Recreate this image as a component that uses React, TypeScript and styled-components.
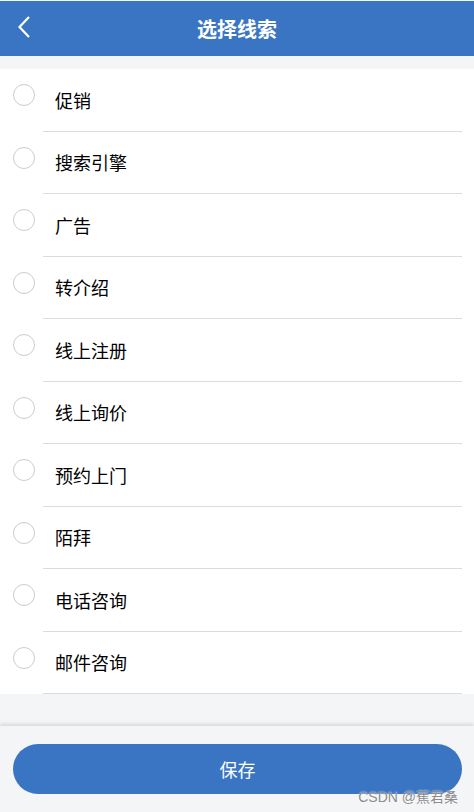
import * as React from 'react';
import styled, { createGlobalStyle } from 'styled-components';

const GlobalStyle = createGlobalStyle`
  html, body {
    margin: 0;
    padding: 0;
    background: #f4f5f7;
    font-family: "Noto Sans CJK SC", "Liberation Sans", sans-serif;
  }
`;

const options = [
  '促销',
  '搜索引擎',
  '广告',
  '转介绍',
  '线上注册',
  '线上询价',
  '预约上门',
  '陌拜',
  '电话咨询',
  '邮件咨询',
];

const SPage = styled.div`
  position: relative;
  min-height: 812px;
  display: flex;
  flex-direction: column;
  padding-top: 1px;
  box-sizing: border-box;
  background: #f4f5f7;
`;

const SHeader = styled.header`
  height: 55px;
  background: #3a75c4;
  display: flex;
  align-items: center;
  justify-content: center;
  position: relative;
`;

const SBack = styled.button`
  position: absolute;
  left: 12px;
  top: 10px;
  width: 24px;
  height: 32px;
  padding: 0;
  border: none;
  background: transparent;
  display: flex;
  align-items: center;
  justify-content: center;
`;

const STitle = styled.h1`
  margin: 0;
  color: #fff;
  font-size: 20px;
  font-weight: 700;
  line-height: 1;
`;

const SList = styled.ul`
  list-style: none;
  margin: 13px 0 0;
  padding: 0;
  background: #fff;
`;

const SRow = styled.li`
  display: flex;
  height: 62.5px;
`;

const SRadioCell = styled.div`
  width: 43px;
  padding: 15px 0 0 13px;
  box-sizing: border-box;
`;

const SRadio = styled.span<{ checked?: boolean }>`
  display: block;
  width: 22px;
  height: 22px;
  border-radius: 50%;
  box-sizing: border-box;
  border: 1px solid ${(p) => (p.checked ? '#3a75c4' : '#cccccc')};
  background: ${(p) => (p.checked ? '#3a75c4' : '#fff')};
`;

const SLabel = styled.div`
  flex: 1;
  margin-right: 12px;
  padding-left: 12px;
  display: flex;
  align-items: center;
  border-bottom: 1px solid #dcdcdc;
  font-size: 18px;
  color: #000;
`;

const SFooter = styled.footer`
  margin-top: auto;
  height: 86px;
  background: #f4f5f7;
  box-shadow: 0 -2px 4px rgba(0, 0, 0, 0.12);
  padding: 18px 12px 0 13px;
  box-sizing: border-box;
`;

const SSave = styled.button`
  width: 100%;
  height: 50px;
  border: none;
  border-radius: 25px;
  background: #3a75c4;
  color: #fff;
  font-family: inherit;
  font-size: 18px;
`;

const SWatermark = styled.div`
  position: absolute;
  right: 16px;
  bottom: 6px;
  font-size: 14px;
  color: #8c8c8c;
  font-family: "Liberation Sans", "Noto Sans CJK SC", sans-serif;
  text-shadow: 0 0 2px #fff;
`;

export default function App() {
  const [selected, setSelected] = React.useState<number | null>(null);

  return (
    <SPage>
      <GlobalStyle />
      <SHeader>
        <SBack aria-label="返回">
          <svg width="16" height="24" viewBox="0 0 16 24" fill="none">
            <path d="M13 2 L3.5 12 L13 22" stroke="#fff" strokeWidth="2.2" />
          </svg>
        </SBack>
        <STitle>选择线索</STitle>
      </SHeader>
      <SList>
        {options.map((name, i) => (
          <SRow key={name} onClick={() => setSelected(i)}>
            <SRadioCell>
              <SRadio checked={selected === i} />
            </SRadioCell>
            <SLabel>{name}</SLabel>
          </SRow>
        ))}
      </SList>
      <SFooter>
        <SSave>保存</SSave>
      </SFooter>
      <SWatermark>CSDN @蕉君桑</SWatermark>
    </SPage>
  );
}
